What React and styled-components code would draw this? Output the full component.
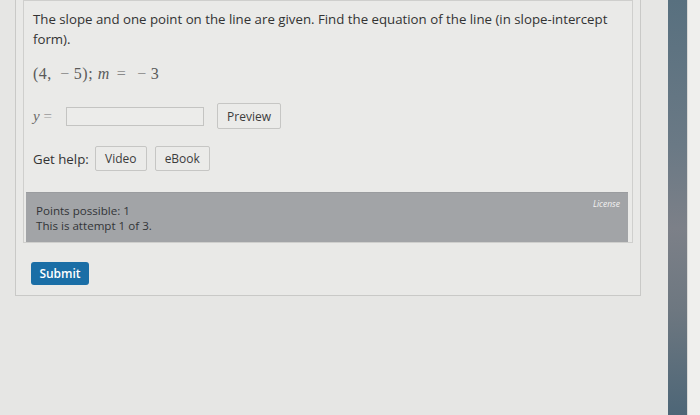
import React from "react";
import styled, { createGlobalStyle } from "styled-components";

const Global = createGlobalStyle`
  html, body {
    margin: 0;
    padding: 0;
  }
  body {
    font-family: "Open Sans", "Liberation Sans", sans-serif;
    background: #e5e5e3;
  }
`;

const Page = styled.div`
  display: flex;
  width: 700px;
  height: 415px;
  overflow: hidden;
  background: #e6e6e4;
`;

const Main = styled.div`
  flex: 0 0 668px;
  padding-left: 15px;
  box-sizing: border-box;
`;

const Card = styled.div`
  width: 626px;
  box-sizing: border-box;
  border: 1px solid #c9c9c7;
  border-top: none;
  padding: 0 7px 10px 7px;
  background: #e9e9e7;
`;

const Question = styled.div`
  width: 610px;
  box-sizing: border-box;
  border: 1px solid #cfcfcd;
  background: #eaeae8;
`;

const Body = styled.div`
  padding: 8px 9px 0 9px;
  height: 191px;
  box-sizing: border-box;
  color: #3a3a3a;
`;

const Prompt = styled.p`
  margin: 0;
  font-size: 13.25px;
  line-height: 20px;
  color: #333;
`;

const MathLine = styled.div`
  margin-top: 16px;
  font-family: "Liberation Serif", "DejaVu Serif", serif;
  font-size: 16px;
  color: #5a5a5a;
  letter-spacing: 0.5px;
`;

const Var = styled.i`
  font-style: italic;
`;

const Op = styled.span`
  margin: 0 ${(p) => p.$gap || 4}px;
  color: #8a8a8a;
`;

const AnswerRow = styled.div`
  display: flex;
  align-items: center;
  margin-top: 20px;
`;

const MathLabel = styled.span`
  font-family: "Liberation Serif", "DejaVu Serif", serif;
  font-size: 15px;
  color: #6a6a6a;
  width: 33px;
`;

const Input = styled.div`
  width: 136px;
  height: 17px;
  border: 1px solid #c4c4c2;
  background: #ececea;
`;

const Button = styled.div`
  display: flex;
  align-items: center;
  justify-content: center;
  box-sizing: border-box;
  width: ${(p) => p.$w}px;
  height: ${(p) => p.$h || 25}px;
  margin-left: ${(p) => p.$ml || 0}px;
  border: 1px solid #c6c6c4;
  border-radius: 2px;
  background: #ebebe9;
  font-size: 12px;
  color: #3c3c3c;
`;

const HelpRow = styled.div`
  display: flex;
  align-items: center;
  margin-top: 17px;
`;

const HelpLabel = styled.span`
  font-size: 13.25px;
  color: #333;
  margin-right: 6px;
`;

const Band = styled.div`
  display: flex;
  justify-content: space-between;
  align-items: flex-start;
  height: 50px;
  box-sizing: border-box;
  margin: 0 4px 0 2px;
  padding: 10px 8px 0 10px;
  background: #a2a4a7;
  border-top: 1px solid #9a9c9f;
`;

const BandText = styled.div`
  font-size: 11.6px;
  line-height: 15px;
  color: #333538;
`;

const License = styled.span`
  font-size: 8.5px;
  font-style: italic;
  color: #f2f2f2;
  margin-top: -5px;
`;

const Submit = styled.div`
  display: inline-flex;
  align-items: center;
  justify-content: center;
  margin: 19px 0 0 8px;
  width: 58px;
  height: 23px;
  border-radius: 3px;
  background: #1a6ea6;
  color: #fff;
  font-size: 12px;
  font-weight: 600;
`;

const Bar = styled.div`
  flex: 0 0 19px;
  height: 415px;
  background: linear-gradient(
    180deg,
    #58707f 0%,
    #6a7985 35%,
    #7c8088 55%,
    #6d7780 75%,
    #4d6677 100%
  );
`;

const Edge = styled.div`
  flex: 0 0 13px;
  background: #efefed;
  border-left: 1px solid #d8d8d6;
`;

export default function App() {
  return (
    <Page>
      <Global />
      <Main>
        <Card>
          <Question>
            <Body>
              <Prompt>
                The slope and one point on the line are given. Find the equation of the line (in
                slope-intercept form).
              </Prompt>
              <MathLine>
                (4, <Op $gap={4}>−</Op>5); <Var>m</Var>
                <Op $gap={7}>=</Op>
                <Op $gap={4}>−</Op>3
              </MathLine>
              <AnswerRow>
                <MathLabel>
                  <Var>y</Var> <span style={{ color: "#999" }}>=</span>
                </MathLabel>
                <Input />
                <Button $ml={13} $h={26} $w={64}>
                  Preview
                </Button>
              </AnswerRow>
              <HelpRow>
                <HelpLabel>Get help:</HelpLabel>
                <Button $h={25} $w={52}>
                  Video
                </Button>
                <Button $ml={8} $h={25} $w={55}>
                  eBook
                </Button>
              </HelpRow>
            </Body>
            <Band>
              <BandText>
                Points possible: 1
                <br />
                This is attempt 1 of 3.
              </BandText>
              <License>License</License>
            </Band>
          </Question>
          <Submit>Submit</Submit>
        </Card>
      </Main>
      <Bar />
      <Edge />
    </Page>
  );
}
